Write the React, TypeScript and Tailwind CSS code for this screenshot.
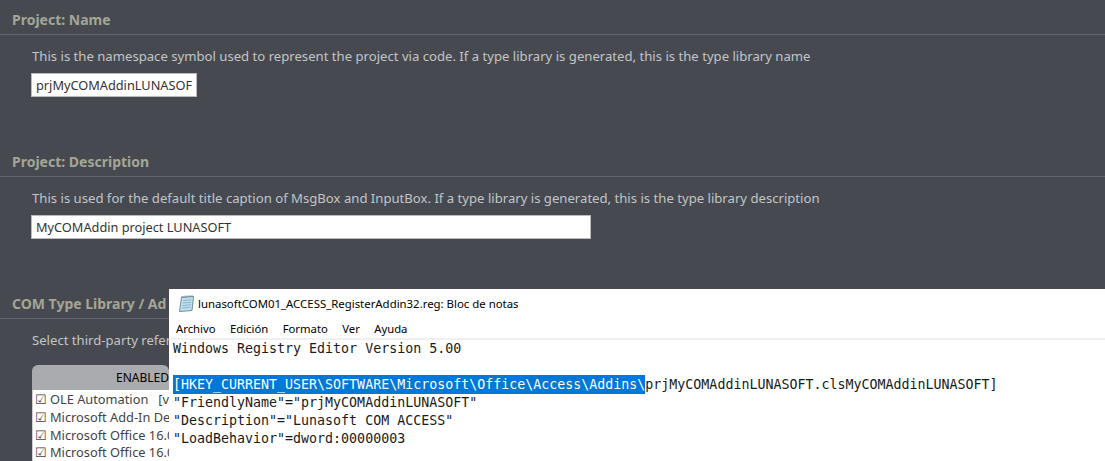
const sans = "font-['Noto_Sans','Open_Sans',sans-serif]"

const references = [
  'OLE Automation   [v',
  'Microsoft Add-In Des',
  'Microsoft Office 16.0',
  'Microsoft Office 16.0',
]

function NotepadIcon() {
  return (
    <svg width="17" height="18" viewBox="0 0 17 18" className="shrink-0">
      <path d="M3.5 2.5 L15.5 1.5 L14 15.5 L1.5 16.5 Z" fill="#bfe0ee" stroke="#6d8ea0" strokeWidth="1" />
      <path d="M5 5.5 L13.5 4.8 M4.7 8 L13.2 7.3 M4.4 10.5 L13 9.8 M4.1 13 L12.7 12.3" stroke="#7fa9bd" strokeWidth="0.8" />
      <path d="M4 2.4 V1 M6 2.2 V0.8 M8 2 V0.6 M10 1.9 V0.5 M12 1.7 V0.4 M14 1.6 V0.3" stroke="#5a6b78" strokeWidth="0.9" />
    </svg>
  )
}

function Section({ title, text, children }: { title: string; text: string; children?: React.ReactNode }) {
  return (
    <section className="h-[142px] pt-[10px]">
      <h2 className="pl-3 text-[14px] leading-[20px] font-bold whitespace-nowrap text-[#a3a696]">{title}</h2>
      <div className="mt-[4px] border-t border-[#62656b] pl-[32px] pt-[11px]">
        <p className="text-[13.13px] leading-[20px] whitespace-nowrap text-[#c3c5c6]">{text}</p>
        {children}
      </div>
    </section>
  )
}

export default function App() {
  return (
    <div className={`relative h-[461px] w-[1105px] overflow-hidden bg-[#464950] ${sans}`}>
      <Section
        title="Project: Name"
        text="This is the namespace symbol used to represent the project via code. If a type library is generated, this is the type library name"
      >
        <div className="mt-[7px] flex h-[24px] w-[166px] -translate-x-px items-center overflow-hidden border border-[#b9bbbd] bg-white pl-[4px] pt-[1px] text-[12.75px] whitespace-nowrap text-[#333]">
          prjMyCOMAddinLUNASOF
        </div>
      </Section>
      <Section
        title="Project: Description"
        text="This is used for the default title caption of MsgBox and InputBox. If a type library is generated, this is the type library description"
      >
        <div className="mt-[7px] flex h-[24px] w-[560px] -translate-x-px items-center border border-[#b9bbbd] bg-white pl-[4px] pt-[1px] text-[12.75px] text-[#333]">
          MyCOMAddin project LUNASOFT
        </div>
      </Section>
      <Section title="COM Type Library / Ad" text="Select third-party refer">
        <div className="mt-[15px] w-[137px]">
          <div className="flex h-[25px] items-center rounded-t-[6px] bg-[#a9abae] pl-[84px] text-[12px] text-black">
            ENABLED
          </div>
          <ul className="border-l border-[#d0d0d0] bg-white pl-[2px] pt-[1px] text-[12.8px] leading-[17.8px] text-[#444]">
            {references.map((name, i) => (
              <li key={i} className="flex gap-[3px] whitespace-pre">
                <span>☑</span>
                <span>{name}</span>
              </li>
            ))}
          </ul>
        </div>
      </Section>

      {/* Notepad window over the page */}
      <div className="absolute top-[289px] left-[169px] h-[172px] w-[936px] bg-white text-black">
        <div className="flex h-[29px] items-center gap-[3px] pl-[9px] text-[11.4px]">
          <NotepadIcon />
          <span>lunasoftCOM01_ACCESS_RegisterAddin32.reg: Bloc de notas</span>
        </div>
        <div className="flex h-[22px] items-center gap-[14.4px] border-b-2 border-[#f0f0f0] pl-[7px] pt-[2px] text-[11.3px]">
          <span>Archivo</span>
          <span>Edición</span>
          <span>Formato</span>
          <span>Ver</span>
          <span>Ayuda</span>
        </div>
        <pre className="pl-[4px] font-['DejaVu_Sans_Mono',monospace] text-[13.3px] leading-[18px] text-[#1a1a1a]">
          {'Windows Registry Editor Version 5.00\n\n'}
          <span className="bg-[#0078d7] py-[2px] text-white">{'[HKEY_CURRENT_USER\\SOFTWARE\\Microsoft\\Office\\Access\\Addins\\'}</span>
          {'prjMyCOMAddinLUNASOFT.clsMyCOMAddinLUNASOFT]\n'}
          {'"FriendlyName"="prjMyCOMAddinLUNASOFT"\n'}
          {'"Description"="Lunasoft COM ACCESS"\n'}
          {'"LoadBehavior"=dword:00000003'}
        </pre>
      </div>
    </div>
  )
}
